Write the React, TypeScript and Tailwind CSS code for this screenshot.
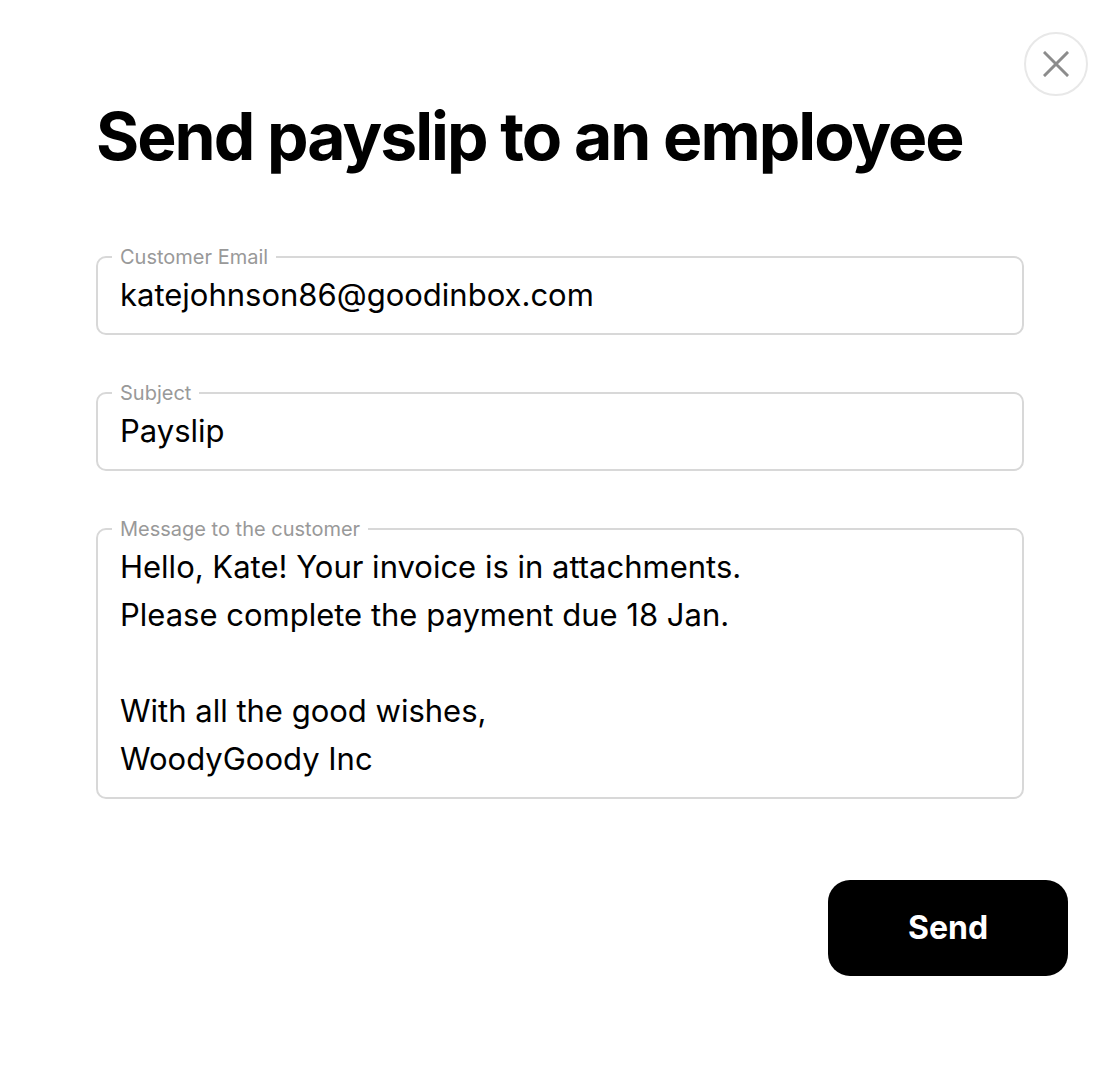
import React from "react";

function Field({ label, children }: { label: string; children: React.ReactNode }) {
  return (
    <fieldset className="border-2 border-[#d8d8d8] rounded-[10px] pl-[14px] pr-4 pt-[4px] pb-[14px]">
      <legend className="px-2 text-[20px] leading-[20px] text-[#999999]">{label}</legend>
      <div className="pl-2 text-[31px] leading-[48px] text-black">{children}</div>
    </fieldset>
  );
}

export default function App() {
  return (
    <div className="relative w-[1120px] h-[1072px] bg-white" style={{ fontFamily: "Inter, 'Noto Sans', sans-serif" }}>
      <button className="absolute top-8 right-8 w-16 h-16 rounded-full border-2 border-[#e8e8e8] flex items-center justify-center">
        <svg width="26" height="26" viewBox="0 0 26 26" fill="none" stroke="#8c8c8c" strokeWidth="3" strokeLinecap="square">
          <path d="M2 2 L24 24 M24 2 L2 24" />
        </svg>
      </button>
      <div className="flex flex-col pl-24 pr-24 pt-[103px]">
        <h1 className="text-[66px] leading-none font-bold text-black tracking-[-0.03em]">Send payslip to an employee</h1>
        <div className="flex flex-col gap-[48px] mt-[78px]">
          <Field label="Customer Email">katejohnson86@goodinbox.com</Field>
          <Field label="Subject">Payslip</Field>
          <Field label="Message to the customer">
            <div>Hello, Kate! Your invoice is in attachments.</div>
            <div>Please complete the payment due 18 Jan.</div>
            <div>&nbsp;</div>
            <div>With all the good wishes,</div>
            <div>WoodyGoody Inc</div>
          </Field>
        </div>
      </div>
      <div className="flex justify-end pr-[52px] mt-[81px]">
        <button className="w-[240px] h-[96px] rounded-[22px] bg-black text-white text-[32px] font-bold">Send</button>
      </div>
    </div>
  );
}
